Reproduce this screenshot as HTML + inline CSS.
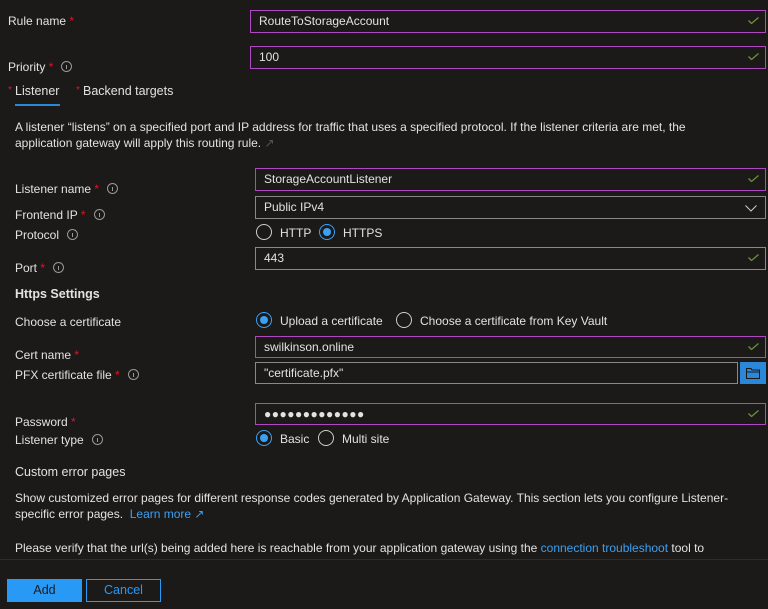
<!DOCTYPE html>
<html><head><meta charset="utf-8">
<style>
*{box-sizing:border-box;margin:0;padding:0}
html,body{width:768px;height:609px;background:#1b1a19;overflow:hidden}
body{position:relative;font-family:"Liberation Sans",sans-serif;font-size:12px;color:#e4e2e0}
.a{position:absolute;white-space:nowrap;line-height:14px}
.r{color:#e81123}
.i{display:inline-block;width:11px;height:11px;border:1px solid #9a9896;border-radius:50%;vertical-align:-1px;margin-left:8px;position:relative}
.i:after{content:"";position:absolute;left:4px;top:3px;width:1px;height:4px;background:#9a9896}
.box{position:absolute;border:1px solid #8a8886;background:#1b1a19;height:23px;padding-left:8px;line-height:21px;font-size:12px;color:#e4e2e0}
.p{border-color:#b146c2}
.ck{position:absolute;right:6px;top:6px;width:11px;height:7px}
.rad{position:absolute;width:16px;height:16px;border:1px solid #cfcdcb;border-radius:50%}
.rad.on{border-color:#3aa0f3}
.rad.on:after{content:"";position:absolute;left:3px;top:3px;width:8px;height:8px;border-radius:50%;background:#3aa0f3}
a{color:#3aa0f3;text-decoration:none}
</style></head><body>
<div class="a" style="left:8px;top:14px">Rule name <span class="r">*</span></div>
<div class="box p" style="left:250px;top:10px;width:516px">RouteToStorageAccount<svg class="ck" viewBox="0 0 11 7"><path d="M0.5 3.5L3.5 6.5L10.5 0.5" stroke="#6b8f3a" fill="none" stroke-width="1.3"/></svg></div>
<div class="a" style="left:8px;top:60px">Priority <span class="r">*</span><span class="i"></span></div>
<div class="box p" style="left:250px;top:46px;width:516px">100<svg class="ck" viewBox="0 0 11 7"><path d="M0.5 3.5L3.5 6.5L10.5 0.5" stroke="#6b8f3a" fill="none" stroke-width="1.3"/></svg></div>
<div class="a r" style="left:8px;top:84px;font-size:10px">*</div>
<div class="a" style="left:15px;top:84px;font-size:12.5px">Listener</div>
<div style="position:absolute;left:15px;top:104px;width:45px;height:2px;background:#2b88d8"></div>
<div class="a r" style="left:76px;top:84px;font-size:10px">*</div>
<div class="a" style="left:83px;top:84px;font-size:12.5px">Backend targets</div>
<div class="a" style="left:15px;top:120px">A listener “listens” on a specified port and IP address for traffic that uses a specified protocol. If the listener criteria are met, the</div>
<div class="a" style="left:15px;top:136px">application gateway will apply this routing rule. <span style="color:#555">↗</span></div>
<div class="a" style="left:15px;top:182px">Listener name <span class="r">*</span><span class="i"></span></div>
<div class="box p" style="left:255px;top:168px;width:511px">StorageAccountListener<svg class="ck" viewBox="0 0 11 7"><path d="M0.5 3.5L3.5 6.5L10.5 0.5" stroke="#6b8f3a" fill="none" stroke-width="1.3"/></svg></div>
<div class="a" style="left:15px;top:208px">Frontend IP <span class="r">*</span><span class="i"></span></div>
<div class="box" style="left:255px;top:196px;width:511px">Public IPv4<svg style="position:absolute;right:8px;top:8px" width="12" height="7" viewBox="0 0 12 7"><path d="M0.5 0.5L6 6L11.5 0.5" stroke="#cfcdcb" fill="none"/></svg></div>
<div class="a" style="left:15px;top:228px">Protocol<span class="i"></span></div>
<div class="rad" style="left:256px;top:224px"></div><div class="a" style="left:280px;top:226px">HTTP</div>
<div class="rad on" style="left:319px;top:224px"></div><div class="a" style="left:343px;top:226px">HTTPS</div>
<div class="a" style="left:15px;top:261px">Port <span class="r">*</span><span class="i"></span></div>
<div class="box" style="left:255px;top:247px;width:511px">443<svg class="ck" viewBox="0 0 11 7"><path d="M0.5 3.5L3.5 6.5L10.5 0.5" stroke="#6b8f3a" fill="none" stroke-width="1.3"/></svg></div>
<div class="a" style="left:15px;top:287px;font-weight:bold;font-size:12.5px">Https Settings</div>
<div class="a" style="left:15px;top:315px">Choose a certificate</div>
<div class="rad on" style="left:256px;top:312px"></div><div class="a" style="left:280px;top:314px">Upload a certificate</div>
<div class="rad" style="left:396px;top:312px"></div><div class="a" style="left:420px;top:314px">Choose a certificate from Key Vault</div>
<div class="a" style="left:15px;top:348px">Cert name <span class="r">*</span></div>
<div class="box p" style="left:255px;top:336px;width:511px;height:22px;line-height:20px">swilkinson.online<svg class="ck" viewBox="0 0 11 7"><path d="M0.5 3.5L3.5 6.5L10.5 0.5" stroke="#6b8f3a" fill="none" stroke-width="1.3"/></svg></div>
<div class="a" style="left:15px;top:368px">PFX certificate file <span class="r">*</span><span class="i"></span></div>
<div class="box" style="left:255px;top:362px;width:483px;height:22px;line-height:20px">"certificate.pfx"</div>
<div style="position:absolute;left:740px;top:362px;width:26px;height:22px;background:#2b88d8"><svg style="position:absolute;left:6px;top:5px" width="14" height="12" viewBox="0 0 14 12"><path d="M0.5 1.5H5L6 3H13.5V11.5H0.5Z M0.5 5H13.5" stroke="#1b1a19" fill="none"/></svg></div>
<div class="a" style="left:15px;top:415px">Password <span class="r">*</span></div>
<div class="box p" style="left:255px;top:403px;width:511px;height:22px;line-height:20px;letter-spacing:0.5px">●●●●●●●●●●●●●<svg class="ck" viewBox="0 0 11 7"><path d="M0.5 3.5L3.5 6.5L10.5 0.5" stroke="#6b8f3a" fill="none" stroke-width="1.3"/></svg></div>
<div class="a" style="left:15px;top:433px">Listener type<span class="i"></span></div>
<div class="rad on" style="left:256px;top:430px"></div><div class="a" style="left:280px;top:432px">Basic</div>
<div class="rad" style="left:318px;top:430px"></div><div class="a" style="left:342px;top:432px">Multi site</div>
<div class="a" style="left:15px;top:465px;font-size:12.5px">Custom error pages</div>
<div class="a" style="left:15px;top:491px">Show customized error pages for different response codes generated by Application Gateway. This section lets you configure Listener-</div>
<div class="a" style="left:15px;top:507px">specific error pages.&nbsp; <a>Learn more ↗</a></div>
<div class="a" style="left:15px;top:541px">Please verify that the url(s) being added here is reachable from your application gateway using the <a>connection troubleshoot</a> tool to</div>
<div style="position:absolute;left:0;top:559px;width:768px;height:1px;background:#2e2d2c"></div>
<div style="position:absolute;left:7px;top:579px;width:75px;height:23px;background:#2899f5;color:#1b1a19;text-align:center;line-height:23px;font-size:12.5px">Add</div>
<div style="position:absolute;left:86px;top:579px;width:75px;height:23px;border:1px solid #2899f5;color:#2899f5;text-align:center;line-height:21px;font-size:12.5px">Cancel</div>
</body></html>
